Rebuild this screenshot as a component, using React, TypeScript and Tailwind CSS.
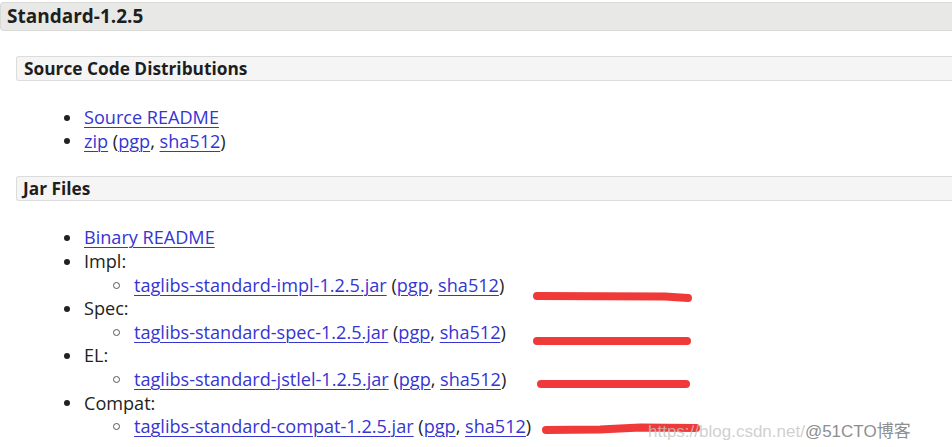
import React from "react";

const A = ({ children }: { children: React.ReactNode }) => (
  <a className="text-[#3535d2] underline underline-offset-[3px] decoration-1">{children}</a>
);

const Dot = () => (
  <span className="w-[20px] shrink-0 flex items-center">
    <span className="w-[6px] h-[6px] rounded-full bg-[#222]" />
  </span>
);
const Circle = () => (
  <span className="w-[18px] shrink-0 flex items-center">
    <span className="w-[7px] h-[7px] rounded-full border-[1.5px] border-[#555]" />
  </span>
);

const Item = ({ children }: { children: React.ReactNode }) => (
  <div className="flex items-center h-[23.6px] pl-[64px]">
    <Dot />
    <span>{children}</span>
  </div>
);
const Sub = ({ children }: { children: React.ReactNode }) => (
  <div className="flex items-center h-[23.6px] pl-[113px]">
    <Circle />
    <span className="pl-[3px]">{children}</span>
  </div>
);

const Jar = ({ name }: { name: string }) => (
  <Sub>
    <A>{name}</A> (<A>pgp</A>, <A>sha512</A>)
  </Sub>
);

export default function App() {
  return (
    <div
      className="relative w-[952px] h-[447px] overflow-hidden bg-white text-[#222] text-[18.1px]"
      style={{ fontFamily: '"Open Sans", "Noto Sans", sans-serif' }}
    >
      <div className="pt-[2px]">
        <div className="h-[29px] bg-[#e8e9e7] border-y border-l border-[#d9dad8] rounded-l-[4px] pl-[6px] flex items-center font-bold text-[19px] text-[#1e1e1e]">
          Standard-1.2.5
        </div>
      </div>
      <div className="ml-[16px] mt-[25px] h-[25px] bg-[#f5f5f5] border-y border-l border-[#dcdcdc] rounded-l-[3px] pl-[7px] flex items-center font-bold text-[17.3px] text-[#1e1e1e]">
        Source Code Distributions
      </div>
      <div className="mt-[25px]">
        <Item>
          <A>Source README</A>
        </Item>
        <Item>
          <A>zip</A> (<A>pgp</A>, <A>sha512</A>)
        </Item>
      </div>
      <div className="ml-[16px] mt-[23px] h-[25px] bg-[#f5f5f5] border-y border-l border-[#dcdcdc] rounded-l-[3px] pl-[6px] flex items-center font-bold text-[17.3px] text-[#1e1e1e]">
        Jar Files
      </div>
      <div className="mt-[25px]">
        <Item>
          <A>Binary README</A>
        </Item>
        <Item>Impl:</Item>
        <Jar name="taglibs-standard-impl-1.2.5.jar" />
        <Item>Spec:</Item>
        <Jar name="taglibs-standard-spec-1.2.5.jar" />
        <Item>EL:</Item>
        <Jar name="taglibs-standard-jstlel-1.2.5.jar" />
        <Item>Compat:</Item>
        <Jar name="taglibs-standard-compat-1.2.5.jar" />
      </div>

      <svg className="absolute left-0 top-0 pointer-events-none" width="952" height="447">
        <g stroke="#f03030" strokeLinecap="round" fill="none" opacity="0.95">
          <path d="M537 296 L665 296.5 L688 298" strokeWidth="8" />
          <path d="M537 341 L687 341" strokeWidth="8" />
          <path d="M541 384 L686 384" strokeWidth="8" />
          <path d="M546 430 L600 429.5 L640 427.5 L696 428" strokeWidth="8" />
        </g>
      </svg>
      <div
        className="absolute left-[648px] top-[421px] text-[17px] leading-[22px] text-[#c4c4c4]/80 whitespace-nowrap pointer-events-none"
        style={{ fontFamily: '"Liberation Sans", "Noto Sans CJK SC", sans-serif' }}
      >
        https://blog.csdn.net/<span className="text-[#8e8e8e]">@51CTO博客</span>
      </div>
    </div>
  );
}
